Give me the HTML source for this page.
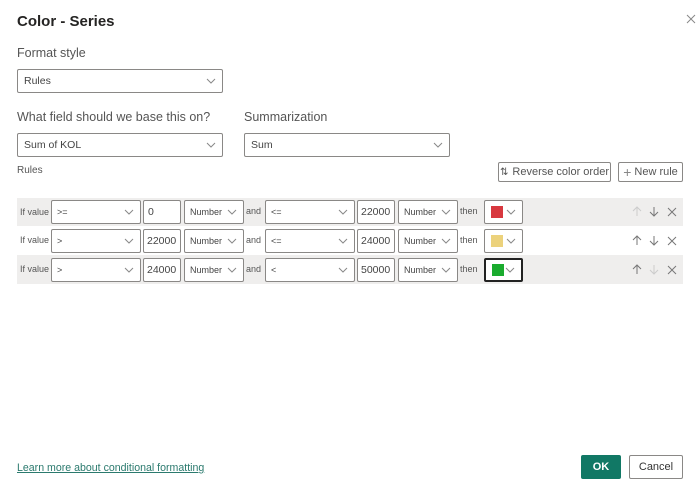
<!DOCTYPE html>
<html><head><meta charset="utf-8"><style>
*{box-sizing:border-box;margin:0;padding:0}
body{width:700px;height:494px;background:#fff;font-family:"Liberation Sans",sans-serif;color:#252423;position:relative;overflow:hidden}
.a{position:absolute}
.dd{position:absolute;border:1px solid #8a8886;border-radius:2px;background:#fff;font-size:10.5px;color:#444;padding-left:6px;display:flex;align-items:center}
.dd svg{position:absolute;right:6px;top:50%;margin-top:-3px}
.dd svg path{stroke:#888}
.sm{font-size:9px;padding-left:5px}
.row{position:absolute;left:17px;width:666px;height:29px}
.lbl{position:absolute;font-size:9px;color:#555}
.btn{position:absolute;border:1px solid #8a8886;border-radius:2px;font-size:11px;color:#555;display:flex;align-items:center;justify-content:center}
.ic{position:absolute}
</style></head><body>
<div class="a" style="left:17px;top:13px;font-size:15px;font-weight:bold;color:#252423">Color - Series</div>
<svg class="a" style="left:686px;top:14px" width="10" height="10"><path d="M1 1L9 9M9 1L1 9" stroke="#888" stroke-width="1"/></svg>
<div class="a" style="left:17px;top:46px;font-size:12.5px;color:#555">Format style</div>
<div class="dd" style="left:17px;top:69px;width:206px;height:24px">Rules<svg width="10" height="6"><path d="M1 1L5 5L9 1" fill="none"/></svg></div>
<div class="a" style="left:17px;top:110px;font-size:12.5px;color:#555">What field should we base this on?</div>
<div class="a" style="left:244px;top:110px;font-size:12.5px;color:#555">Summarization</div>
<div class="dd" style="left:17px;top:133px;width:206px;height:24px">Sum of KOL<svg width="10" height="6"><path d="M1 1L5 5L9 1" fill="none"/></svg></div>
<div class="dd" style="left:244px;top:133px;width:206px;height:24px">Sum<svg width="10" height="6"><path d="M1 1L5 5L9 1" fill="none"/></svg></div>
<div class="a" style="left:17px;top:165px;font-size:10px;color:#555">Rules</div>
<div class="btn" style="left:498px;top:162px;width:113px;height:20px"><span style="font-size:10px;margin-right:4px">⇅</span>Reverse color order</div>
<div class="btn" style="left:618px;top:162px;width:65px;height:20px"><span style="font-size:14px;margin-right:3px;color:#888">+</span>New rule</div>

<div class="row" style="top:198px;background:#efeeed"></div>
<div class="row" style="top:226px;background:#fff"></div>
<div class="row" style="top:255px;background:#efeeed"></div>

<!-- Row 1 -->
<div class="lbl" style="left:20px;top:207px">If value</div>
<div class="dd sm" style="left:51px;top:200px;width:90px;height:24px">&gt;=<svg width="10" height="6"><path d="M1 1L5 5L9 1" fill="none"/></svg></div>
<div class="dd" style="left:143px;top:200px;width:38px;height:24px;padding-left:4px">0</div>
<div class="dd sm" style="left:184px;top:200px;width:60px;height:24px">Number<svg width="10" height="6"><path d="M1 1L5 5L9 1" fill="none"/></svg></div>
<div class="lbl" style="left:246px;top:206px">and</div>
<div class="dd sm" style="left:265px;top:200px;width:90px;height:24px">&lt;=<svg width="10" height="6"><path d="M1 1L5 5L9 1" fill="none"/></svg></div>
<div class="dd" style="left:357px;top:200px;width:38px;height:24px;padding-left:3px">22000</div>
<div class="dd sm" style="left:398px;top:200px;width:60px;height:24px">Number<svg width="10" height="6"><path d="M1 1L5 5L9 1" fill="none"/></svg></div>
<div class="lbl" style="left:460px;top:206px">then</div>
<div class="dd" style="left:484px;top:200px;width:39px;height:24px"><span style="width:12px;height:12px;background:#d8383f;display:block"></span><svg width="10" height="6"><path d="M1 1L5 5L9 1" fill="none"/></svg></div>
<svg class="ic" style="left:632px;top:206px" width="50" height="11"><path d="M5 10V1M1 5L5 1L9 5" stroke="#ccc" fill="none"/><path d="M22 1V10M18 6L22 10L26 6" stroke="#777" fill="none"/><path d="M36 2L44 10M44 2L36 10" stroke="#777"/></svg>

<!-- Row 2 -->
<div class="lbl" style="left:20px;top:235px">If value</div>
<div class="dd sm" style="left:51px;top:229px;width:90px;height:24px">&gt;<svg width="10" height="6"><path d="M1 1L5 5L9 1" fill="none"/></svg></div>
<div class="dd" style="left:143px;top:229px;width:38px;height:24px;padding-left:3px">22000</div>
<div class="dd sm" style="left:184px;top:229px;width:60px;height:24px">Number<svg width="10" height="6"><path d="M1 1L5 5L9 1" fill="none"/></svg></div>
<div class="lbl" style="left:246px;top:235px">and</div>
<div class="dd sm" style="left:265px;top:229px;width:90px;height:24px">&lt;=<svg width="10" height="6"><path d="M1 1L5 5L9 1" fill="none"/></svg></div>
<div class="dd" style="left:357px;top:229px;width:38px;height:24px;padding-left:3px">24000</div>
<div class="dd sm" style="left:398px;top:229px;width:60px;height:24px">Number<svg width="10" height="6"><path d="M1 1L5 5L9 1" fill="none"/></svg></div>
<div class="lbl" style="left:460px;top:235px">then</div>
<div class="dd" style="left:484px;top:229px;width:39px;height:24px"><span style="width:12px;height:12px;background:#ecd27c;display:block"></span><svg width="10" height="6"><path d="M1 1L5 5L9 1" fill="none"/></svg></div>
<svg class="ic" style="left:632px;top:235px" width="50" height="11"><path d="M5 10V1M1 5L5 1L9 5" stroke="#777" fill="none"/><path d="M22 1V10M18 6L22 10L26 6" stroke="#777" fill="none"/><path d="M36 2L44 10M44 2L36 10" stroke="#777"/></svg>

<!-- Row 3 -->
<div class="lbl" style="left:20px;top:264px">If value</div>
<div class="dd sm" style="left:51px;top:258px;width:90px;height:24px">&gt;<svg width="10" height="6"><path d="M1 1L5 5L9 1" fill="none"/></svg></div>
<div class="dd" style="left:143px;top:258px;width:38px;height:24px;padding-left:3px">24000</div>
<div class="dd sm" style="left:184px;top:258px;width:60px;height:24px">Number<svg width="10" height="6"><path d="M1 1L5 5L9 1" fill="none"/></svg></div>
<div class="lbl" style="left:246px;top:264px">and</div>
<div class="dd sm" style="left:265px;top:258px;width:90px;height:24px">&lt;<svg width="10" height="6"><path d="M1 1L5 5L9 1" fill="none"/></svg></div>
<div class="dd" style="left:357px;top:258px;width:38px;height:24px;padding-left:3px">50000</div>
<div class="dd sm" style="left:398px;top:258px;width:60px;height:24px">Number<svg width="10" height="6"><path d="M1 1L5 5L9 1" fill="none"/></svg></div>
<div class="lbl" style="left:460px;top:264px">then</div>
<div class="dd" style="left:484px;top:258px;width:39px;height:24px;border:2px solid #222"><span style="width:12px;height:12px;background:#1aab2e;display:block"></span><svg width="10" height="6"><path d="M1 1L5 5L9 1" fill="none"/></svg></div>
<svg class="ic" style="left:632px;top:264px" width="50" height="11"><path d="M5 10V1M1 5L5 1L9 5" stroke="#777" fill="none"/><path d="M22 1V10M18 6L22 10L26 6" stroke="#ccc" fill="none"/><path d="M36 2L44 10M44 2L36 10" stroke="#777"/></svg>

<div class="a" style="left:17px;top:462px;font-size:10.6px;color:#2b7a6e;text-decoration:underline">Learn more about conditional formatting</div>
<div class="a" style="left:581px;top:455px;width:40px;height:24px;background:#117865;border-radius:2px;color:#fff;font-size:11px;font-weight:bold;display:flex;align-items:center;justify-content:center">OK</div>
<div class="btn" style="left:629px;top:455px;width:54px;height:24px;color:#333">Cancel</div>
</body></html>
